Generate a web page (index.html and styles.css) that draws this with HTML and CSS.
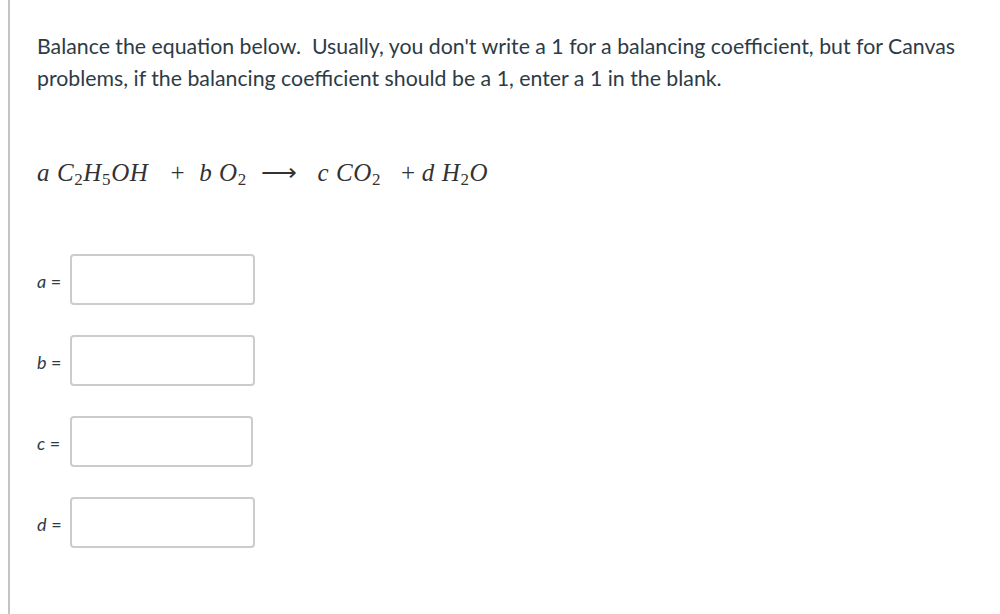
FILE: index.html
```html
<!DOCTYPE html>
<html>
<head>
<meta charset="utf-8">
<link rel="stylesheet" href="styles.css">
</head>
<body>
<div class="question">
  <p class="prompt">Balance the equation below.&nbsp; Usually, you don't write a 1 for a balancing coefficient, but for Canvas problems, if the balancing coefficient should be a 1, enter a 1 in the blank.</p>
  <div class="equation">
    <span class="v">a</span>&nbsp;<span class="v">C</span><sub>2</sub><span class="v">H</span><sub>5</sub><span class="v">OH</span><span class="op">+</span><span class="v">b</span>&nbsp;<span class="v">O</span><sub>2</sub><span class="arrow">⟶</span><span class="v">c</span>&nbsp;<span class="v">CO</span><sub>2</sub><span class="op2">+</span><span class="v">d</span>&nbsp;<span class="v">H</span><sub>2</sub><span class="v">O</span>
  </div>
  <div class="answers">
    <div class="row"><span class="lbl"><i>a</i> =</span><span class="box"></span></div>
    <div class="row"><span class="lbl"><i>b</i> =</span><span class="box"></span></div>
    <div class="row"><span class="lbl"><i>c</i> =</span><span class="box narrow"></span></div>
    <div class="row"><span class="lbl"><i>d</i> =</span><span class="box"></span></div>
  </div>
</div>
</body>
</html>
```
FILE: styles.css
```css
html, body {
  margin: 0;
  padding: 0;
  background: #fff;
}
body {
  padding-left: 8px;
}
.question {
  border-left: 2px solid #c4c4c4;
  min-height: 614px;
  padding: 30px 0 0 27px;
  box-sizing: border-box;
  color: #2d3b45;
  font-family: Lato, "Noto Sans", sans-serif;
}
.prompt {
  margin: 0;
  font-size: 21.3px;
  line-height: 32px;
  width: 940px;
}
.equation {
  margin-top: 64px;
  font-family: "Liberation Serif", "Times New Roman", serif;
  font-size: 25px;
  color: #333;
  line-height: 30px;
  white-space: nowrap;
  letter-spacing: 0.6px;
}
.equation .v {
  font-style: italic;
}
.equation sub {
  font-size: 17px;
  vertical-align: -4px;
  line-height: 0;
}
.equation .op {
  margin: 0 14px 0 22px;
}
.equation .op2 {
  margin: 0 6px 0 20px;
}
.equation .arrow {
  margin: 0 20px 0 14px;
  font-style: normal;
}
.answers {
  margin-top: 66px;
  display: flex;
  flex-direction: column;
  gap: 30px;
}
.row {
  display: flex;
  align-items: center;
  gap: 7px;
}
.lbl {
  width: 26px;
  font-size: 18px;
  white-space: nowrap;
  padding-top: 3px;
}
.lbl i {
  font-style: italic;
}
.box {
  width: 181px;
  height: 47px;
  border: 2px solid #ccc;
  border-radius: 4px;
  background: #fff;
}
.box.narrow {
  width: 179px;
}
```
